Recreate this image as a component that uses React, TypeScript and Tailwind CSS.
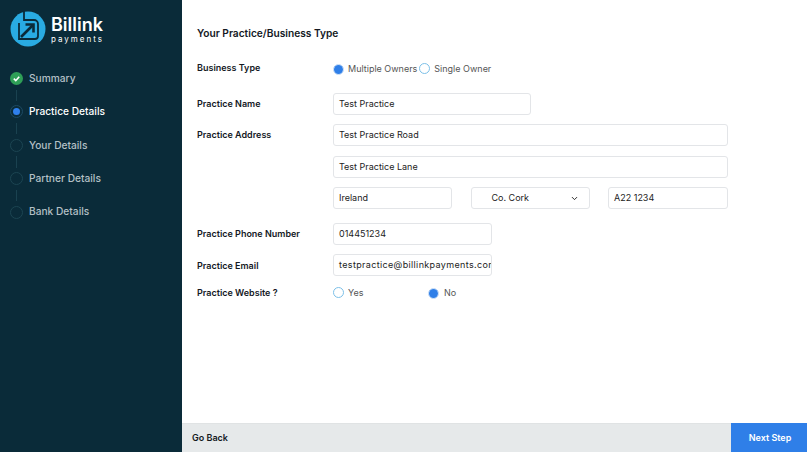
import { ChevronDown } from "lucide-react";

const steps = [
  { name: "Summary", state: "done" },
  { name: "Practice Details", state: "active" },
  { name: "Your Details", state: "todo" },
  { name: "Partner Details", state: "todo" },
  { name: "Bank Details", state: "todo" },
];

const Logo = () => (
  <svg width="36" height="36" viewBox="0 0 36 36" className="shrink-0">
    <circle cx="18" cy="18" r="17.5" fill="#29abe2" />
    <path d="M14 0v9h10a4 4 0 0 1 4 4v12a3 3 0 0 1-3 3H9V12" fill="none" stroke="#0a2b39" strokeWidth="1.8" />
    <path d="M11 26 23 14" stroke="#0a2b39" strokeWidth="2.6" fill="none" />
    <path d="M15.5 13.5h8v8" stroke="#0a2b39" strokeWidth="2.6" fill="none" />
  </svg>
);

const StepDot = ({ state }: { state: string }) => {
  if (state === "done") {
    return (
      <span className="flex h-[13px] w-[13px] items-center justify-center rounded-full bg-[#2f9e57]">
        <svg width="9" height="9" viewBox="0 0 10 10">
          <path d="M2 5.2 4.2 7.4 8 3" fill="none" stroke="#fff" strokeWidth="1.8" />
        </svg>
      </span>
    );
  }
  if (state === "active") {
    return (
      <span className="flex h-[13px] w-[13px] items-center justify-center rounded-full border border-[#1c4a63]">
        <span className="h-[7px] w-[7px] rounded-full bg-[#2f80ed]" />
      </span>
    );
  }
  return <span className="h-[13px] w-[13px] rounded-full border border-[#1c4552]" />;
};

const Field = ({ value, className }: { value: string; className: string }) => (
  <div className={`flex h-[22px] items-center overflow-hidden whitespace-nowrap rounded-[3px] border border-[#e3e5e8] bg-white px-[5px] text-[9px] text-[#222] ${className}`}>
    {value}
  </div>
);

const Radio = ({ on }: { on?: boolean }) =>
  on ? (
    <div className="flex h-[11px] w-[11px] shrink-0 items-center justify-center rounded-full border border-[#bcd6f5] bg-white">
      <div className="h-[9px] w-[9px] rounded-full bg-[#2f7fe8]" />
    </div>
  ) : (
    <div className="h-[11px] w-[11px] shrink-0 rounded-full border border-[#7cc0e8] bg-white" />
  );

const Label = ({ children }: { children: string }) => (
  <div className="text-[9px] font-semibold leading-[20px] text-[#14191f]">{children}</div>
);

export default function App() {
  return (
    <div className="flex h-[452px] w-[807px] overflow-hidden bg-white font-['Inter','Liberation_Sans',sans-serif]">
      <aside className="flex w-[182px] shrink-0 flex-col bg-[#0a2b39] pl-[10px] pt-[11px]">
        <div className="flex items-center gap-[5px]">
          <Logo />
          <div className="flex flex-col">
            <span className="text-[18px] font-semibold leading-[20px] text-white">Billink</span>
            <span className="text-[8px] leading-[9px] tracking-[2px] text-white">payments</span>
          </div>
        </div>
        <div className="mt-[25px] flex flex-col">
          {steps.map((step, i) => (
            <div key={step.name} className="flex flex-col">
              {i > 0 && <div className="my-[4.5px] ml-[5.75px] h-[11.4px] w-[1.5px] bg-[#1a4250]" />}
              <div className="flex h-[13px] items-center gap-[6px]">
                <StepDot state={step.state} />
                <span className={`text-[10.2px] font-medium ${step.state === "active" ? "text-white" : "text-[#b4c0c6]"}`}>
                  {step.name}
                </span>
              </div>
            </div>
          ))}
        </div>
      </aside>

      <main className="flex min-w-0 flex-1 flex-col">
        <div className="flex-1 pl-[15px] pr-[79px] pt-[24px]">
          <h1 className="text-[10.2px] font-semibold leading-[18px] text-[#14191f]">Your Practice/Business Type</h1>

          <div className="mt-[16px] grid grid-cols-[136px_1fr]">
            <Label>Business Type</Label>
            <div className="flex h-[20px] items-center pt-[2px] text-[9px] text-[#555]">
              <Radio on />
              <span className="ml-[4px]">Multiple Owners</span>
              <div className="-mt-[2px] ml-[2px]"><Radio /></div>
              <span className="ml-[4px]">Single Owner</span>
            </div>
          </div>

          <div className="mt-[15px] grid grid-cols-[136px_1fr]">
            <div className="pt-[1px]"><Label>Practice Name</Label></div>
            <Field value="Test Practice" className="w-[198px]" />
          </div>

          <div className="mt-[9px] grid grid-cols-[136px_1fr]">
            <div className="pt-[1px]"><Label>Practice Address</Label></div>
            <div className="flex flex-col">
              <Field value="Test Practice Road" className="w-full" />
              <Field value="Test Practice Lane" className="mt-[10px] w-full" />
              <div className="mt-[9px] flex justify-between">
                <Field value="Ireland" className="w-[119px]" />
                <div className="flex h-[22px] w-[119px] items-center justify-between rounded-[3px] border border-[#e3e5e8] bg-white pl-[20px] pr-[10px] text-[9px] text-[#222]">
                  Co. Cork
                  <ChevronDown size={9} strokeWidth={2.5} />
                </div>
                <Field value="A22 1234" className="w-[120px]" />
              </div>
            </div>
          </div>

          <div className="mt-[14px] grid grid-cols-[136px_1fr]">
            <div className="pt-[1px]"><Label>Practice Phone Number</Label></div>
            <Field value="014451234" className="w-[159px]" />
          </div>

          <div className="mt-[9px] grid grid-cols-[136px_1fr]">
            <div className="pt-[2px]"><Label>Practice Email</Label></div>
            <Field value="testpractice@billinkpayments.com" className="w-[159px] tracking-[0.35px]" />
          </div>

          <div className="mt-[6px] grid grid-cols-[136px_1fr]">
            <div className="pt-[1px]"><Label>Practice Website ?</Label></div>
            <div className="flex h-[20px] items-center text-[9px] text-[#555]">
              <div className="flex w-[95px] items-center">
                <Radio />
                <span className="ml-[4px] pt-[2px]">Yes</span>
              </div>
              <div className="mt-[2px]"><Radio on /></div>
              <span className="ml-[5px] pt-[2px]">No</span>
            </div>
          </div>
        </div>

        <footer className="flex h-[29px] shrink-0 items-center justify-between border-t border-[#e0e3e4] bg-[#e6e9ea]">
          <span className="pl-[10px] text-[9px] font-semibold text-[#14191f]">Go Back</span>
          <span className="-mt-px flex h-[29px] w-[76px] items-center justify-center bg-[#2f7fe8] pl-[2px] text-[9px] font-semibold text-white">
            Next Step
          </span>
        </footer>
      </main>
    </div>
  );
}
